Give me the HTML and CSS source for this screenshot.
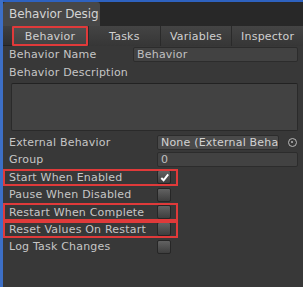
FILE: index.html
```
<!DOCTYPE html>
<html lang="en">
<head>
  <meta charset="UTF-8" />
  <title>Behavior Designer</title>
  <link rel="stylesheet" href="styles.css">
</head>
<body>
  <div class="window">
    <div class="titlebar">
      <div class="tab">Behavior Desig</div>
    </div>
    <div class="toolbar">
      <button class="tool selected">Behavior</button>
      <button class="tool">Tasks</button>
      <button class="tool">Variables</button>
      <button class="tool">Inspector</button>
    </div>
    <div class="panel">
      <div class="row">
        <label class="label name-label">Behavior Name</label>
        <div class="field name-field">Behavior</div>
      </div>
      <div class="row">
        <label class="label">Behavior Description</label>
      </div>
      <div class="textarea"></div>
      <div class="row">
        <label class="label">External Behavior</label>
        <div class="field object-field">None (External Beha</div>
        <span class="picker"></span>
      </div>
      <div class="row">
        <label class="label">Group</label>
        <div class="field group-field">0</div>
      </div>
      <div class="row marked">
        <label class="label">Start When Enabled</label>
        <span class="check on"><svg viewBox="0 0 12 12"><path d="M2.5 6.5L5 9L10 2.5"/></svg></span>
      </div>
      <div class="row">
        <label class="label">Pause When Disabled</label>
        <span class="check"></span>
      </div>
      <div class="row marked">
        <label class="label">Restart When Complete</label>
        <span class="check"></span>
      </div>
      <div class="row marked">
        <label class="label">Reset Values On Restart</label>
        <span class="check"></span>
      </div>
      <div class="row">
        <label class="label">Log Task Changes</label>
        <span class="check"></span>
      </div>
    </div>
  </div>
</body>
</html>
```
FILE: styles.css
```
* { box-sizing: border-box; }
body {
  margin: 0;
  background: #383838;
  font-family: 'DejaVu Sans', sans-serif;
  font-size: 11px;
  letter-spacing: 0.2px;
  color: #c6c6c6;
}
.window {
  border-left: 3px solid #3d6fc6;
  height: 287px;
  background: #383838;
}
.titlebar {
  height: 26px;
  background: #282828;
  border-top: 2px solid #2e62c0;
  display: flex;
  align-items: flex-end;
}
.tab {
  width: 97px;
  height: 24px;
  background: #474747;
  border-radius: 3px 3px 0 0;
  padding: 5px 0 0 6px;
  font-size: 12px;
  letter-spacing: -0.1px;
  color: #d4d4d4;
  margin-top: -2px;
  white-space: nowrap;
  overflow: hidden;
}
.toolbar {
  height: 20px;
  display: flex;
  padding: 0 0 0 9px;
  background: linear-gradient(#3f3f3f, #303030);
  border-bottom: 1px solid #232323;
}
.tool {
  flex: 1;
  height: 20px;
  font: inherit;
  font-size: 11px;
  letter-spacing: 0.2px;
  color: #d0d0d0;
  background: linear-gradient(#444, #363636);
  border: none;
  border-left: 1px solid #2a2a2a;
  padding: 0;
}
.tool.selected {
  flex: 0 0 76px;
  background: linear-gradient(#505050, #434343);
  border: 2px solid #e03a3a;
  border-radius: 1px;
}
.panel {
  padding: 0 5px 0 3px;
}
.row {
  height: 17.4px;
  display: flex;
  align-items: center;
  position: relative;
}
.label {
  width: 151px;
  padding-left: 3px;
  flex-shrink: 0;
  white-space: nowrap;
}
.name-label { width: 127px; }
.field {
  height: 15px;
  flex: 1;
  background: #424242;
  border: 1px solid #2c2c2c;
  border-radius: 2px;
  padding: 0 0 0 3px;
  line-height: 13px;
  color: #c0c0c0;
  white-space: nowrap;
  overflow: hidden;
}
.object-field {
  flex: 0 0 122px;
  background: #4a4a4a;
  color: #d2d2d2;
}
.picker {
  width: 9px;
  height: 9px;
  border: 1.5px solid #b8b8b8;
  border-radius: 50%;
  margin-left: 9px;
  position: relative;
}
.picker::after {
  content: "";
  position: absolute;
  left: 2px;
  top: 2px;
  width: 2px;
  height: 2px;
  background: #b8b8b8;
  border-radius: 50%;
}
.textarea {
  height: 48px;
  margin: 2px 0 3px 5px;
  background: #424242;
  border: 1px solid #2a2a2a;
  border-top-color: #222;
  border-radius: 2px;
}
.marked {
  margin-left: -3px;
  padding-left: 3px;
  width: 175px;
}
.marked::after {
  content: "";
  position: absolute;
  inset: 0;
  border: 2px solid #e03a3a;
  pointer-events: none;
}
.check {
  width: 14px;
  height: 14px;
  border-radius: 2px;
  background: linear-gradient(#626262, #3e3e3e);
  border: 1px solid #262626;
  display: flex;
  align-items: center;
  justify-content: center;
}
.check svg {
  width: 11px;
  height: 11px;
  fill: none;
  stroke: #ffffff;
  stroke-width: 2.2;
}
```
